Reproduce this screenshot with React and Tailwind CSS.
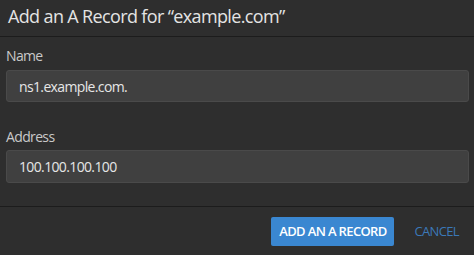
export default function App() {
  return (
    <div
      className="w-[474px] h-[255px] bg-[#2e2e2e] flex flex-col overflow-hidden tracking-[-0.04em]"
      style={{ fontFamily: '"Open Sans", "Noto Sans", sans-serif' }}
    >
      <div className="h-[37px] px-[8px] flex items-center border-b border-[#1c1c1c]">
        <h1 className="text-[18px] text-[#e4e4e4] leading-none pb-[4px]">
          Add an A Record for “example.com”
        </h1>
      </div>
      <div className="pl-[6px] pr-[5px] pt-[9px] h-[170px] border-b border-[#1c1c1c]">
        <label className="block text-[14px] leading-[20px] text-[#c9c9c9] mb-[4px]">
          Name
        </label>
        <div className="h-[32px] rounded-[3px] bg-[#404040] border border-[#4a4a4a] flex items-center px-[12px] text-[14px] text-[#e6e6e6]">
          ns1.example.com.
        </div>
        <label className="block text-[14px] leading-[20px] text-[#c9c9c9] mt-[25px] mb-[3px]">
          Address
        </label>
        <div className="h-[33px] rounded-[3px] bg-[#404040] border border-[#4a4a4a] flex items-center px-[12px] text-[14px] text-[#e6e6e6]">
          100.100.100.100
        </div>
      </div>
      <div className="flex justify-end items-start pt-[10px] pr-[15px]">
        <button className="w-[123px] h-[29px] bg-[#3a87d1] text-white text-[13px] font-semibold rounded-[2px]">
          ADD AN A RECORD
        </button>
        <button className="ml-[20px] h-[29px] text-[13px] text-[#3b78b8]">
          CANCEL
        </button>
      </div>
    </div>
  );
}
